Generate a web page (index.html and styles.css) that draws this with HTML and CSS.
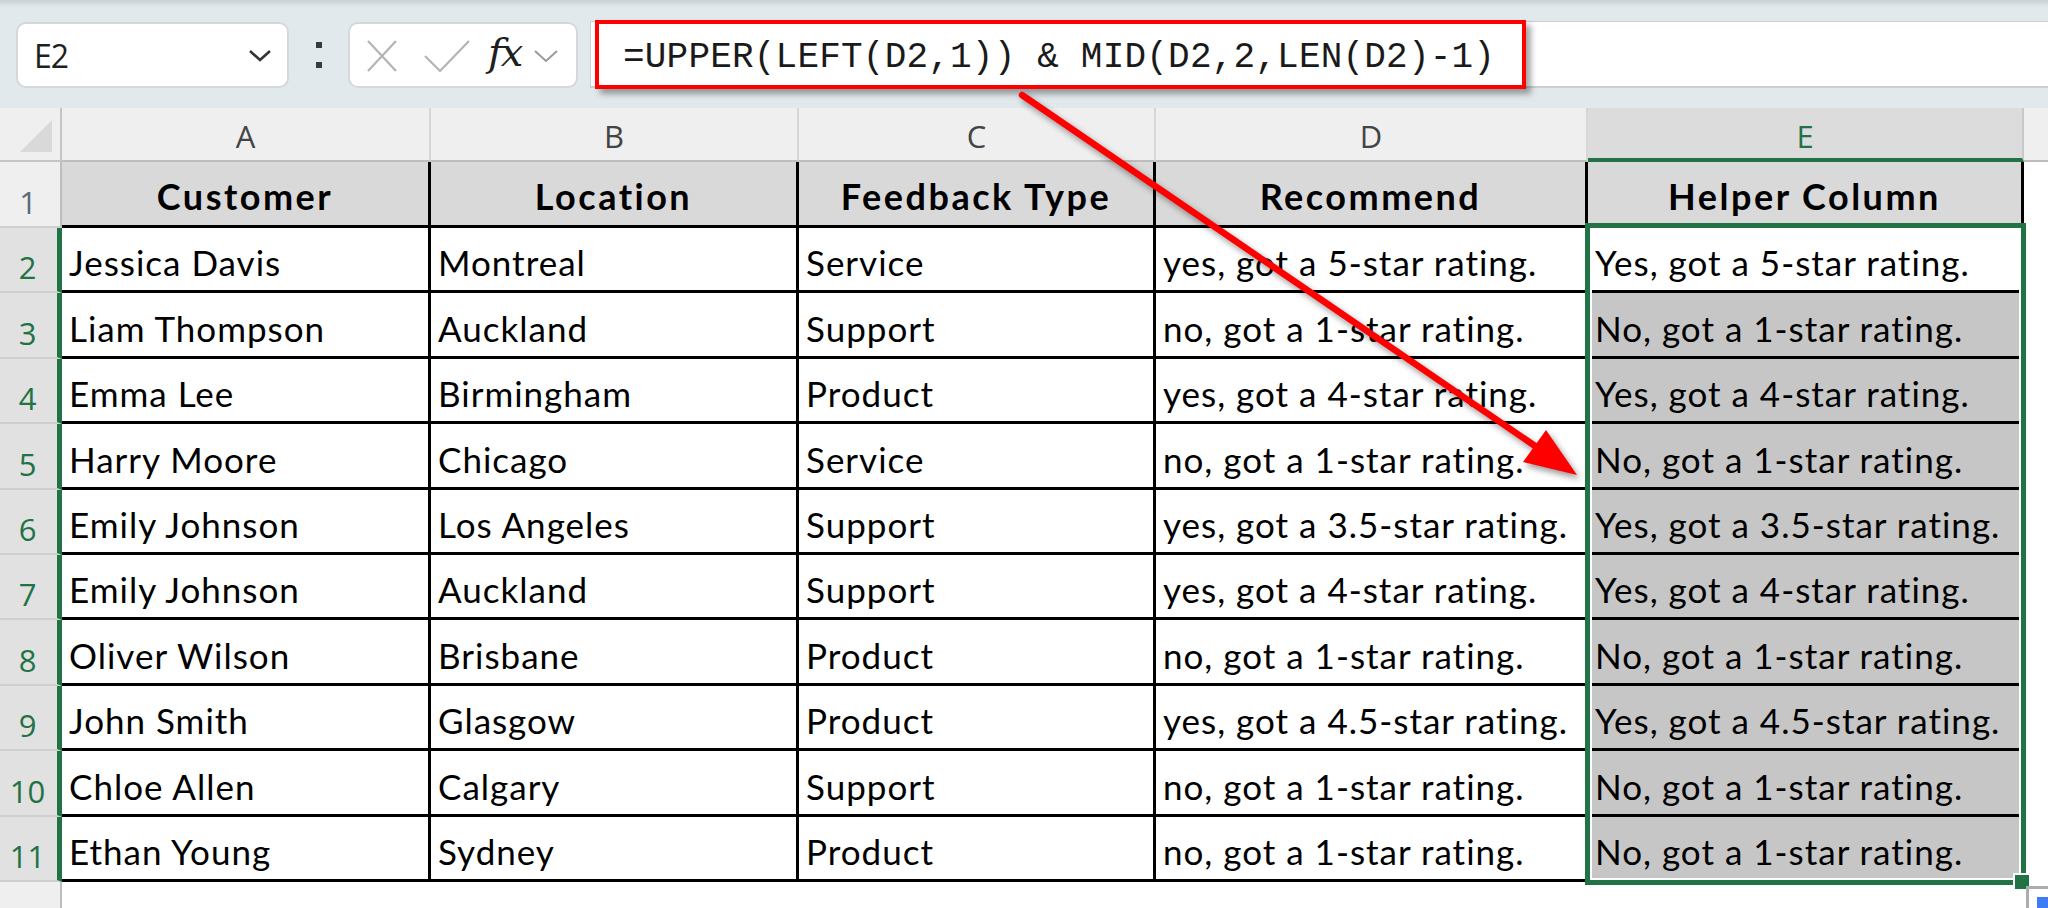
FILE: index.html
```html
<!DOCTYPE html>
<html>
<head>
<meta charset="utf-8">
<link rel="stylesheet" href="styles.css">
</head>
<body>
<div class="toolbar">
  <div class="namebox">
    <span class="nb-text">E2</span>
    <svg class="nb-chev" width="24" height="14" viewBox="0 0 24 14"><path d="M2 2 L12 11 L22 2" fill="none" stroke="#333" stroke-width="2.6"/></svg>
  </div>
  <div class="dots"><i></i><i></i></div>
  <div class="fxbox">
    <svg class="ic-x" width="32" height="34" viewBox="0 0 32 34"><path d="M2 2 L30 32 M30 2 L2 32" fill="none" stroke="#b4b4b4" stroke-width="2.2"/></svg>
    <svg class="ic-check" width="46" height="34" viewBox="0 0 46 34"><path d="M1 17 L16 32 L45 2" fill="none" stroke="#b4b4b4" stroke-width="2.2"/></svg>
    <span class="fx">fx</span>
    <svg class="fx-chev" width="26" height="14" viewBox="0 0 26 14"><path d="M2 2 L13 12 L24 2" fill="none" stroke="#9a9a9a" stroke-width="2"/></svg>
  </div>
  <div class="formula">
    <div class="formula-box">=UPPER(LEFT(D2,1)) &amp; MID(D2,2,LEN(D2)-1)</div>
  </div>
</div>

<div class="sheet">
  <div class="corner"><span class="tri"></span></div>
  <div class="ch">A</div>
  <div class="ch">B</div>
  <div class="ch">C</div>
  <div class="ch">D</div>
  <div class="ch ch-sel">E</div>
  <div class="ch ch-rest"></div>

  <div class="rh">1</div>
  <div class="c hd">Customer</div>
  <div class="c hd">Location</div>
  <div class="c hd">Feedback Type</div>
  <div class="c hd">Recommend</div>
  <div class="c hd">Helper Column</div>
  <div class="rest"></div>

  <div class="rh rh-sel">2</div>
  <div class="c">Jessica Davis</div><div class="c">Montreal</div><div class="c">Service</div><div class="c">yes, got a 5-star rating.</div><div class="c e-act">Yes, got a 5-star rating.</div><div class="rest"></div>

  <div class="rh rh-sel">3</div>
  <div class="c">Liam Thompson</div><div class="c">Auckland</div><div class="c">Support</div><div class="c">no, got a 1-star rating.</div><div class="c e-sel">No, got a 1-star rating.</div><div class="rest"></div>

  <div class="rh rh-sel">4</div>
  <div class="c">Emma Lee</div><div class="c">Birmingham</div><div class="c">Product</div><div class="c">yes, got a 4-star rating.</div><div class="c e-sel">Yes, got a 4-star rating.</div><div class="rest"></div>

  <div class="rh rh-sel">5</div>
  <div class="c">Harry Moore</div><div class="c">Chicago</div><div class="c">Service</div><div class="c">no, got a 1-star rating.</div><div class="c e-sel">No, got a 1-star rating.</div><div class="rest"></div>

  <div class="rh rh-sel">6</div>
  <div class="c">Emily Johnson</div><div class="c">Los Angeles</div><div class="c">Support</div><div class="c">yes, got a 3.5-star rating.</div><div class="c e-sel">Yes, got a 3.5-star rating.</div><div class="rest"></div>

  <div class="rh rh-sel">7</div>
  <div class="c">Emily Johnson</div><div class="c">Auckland</div><div class="c">Support</div><div class="c">yes, got a 4-star rating.</div><div class="c e-sel">Yes, got a 4-star rating.</div><div class="rest"></div>

  <div class="rh rh-sel">8</div>
  <div class="c">Oliver Wilson</div><div class="c">Brisbane</div><div class="c">Product</div><div class="c">no, got a 1-star rating.</div><div class="c e-sel">No, got a 1-star rating.</div><div class="rest"></div>

  <div class="rh rh-sel">9</div>
  <div class="c">John Smith</div><div class="c">Glasgow</div><div class="c">Product</div><div class="c">yes, got a 4.5-star rating.</div><div class="c e-sel">Yes, got a 4.5-star rating.</div><div class="rest"></div>

  <div class="rh rh-sel">10</div>
  <div class="c">Chloe Allen</div><div class="c">Calgary</div><div class="c">Support</div><div class="c">no, got a 1-star rating.</div><div class="c e-sel">No, got a 1-star rating.</div><div class="rest"></div>

  <div class="rh rh-sel">11</div>
  <div class="c">Ethan Young</div><div class="c">Sydney</div><div class="c">Product</div><div class="c">no, got a 1-star rating.</div><div class="c e-sel">No, got a 1-star rating.</div><div class="rest"></div>

  <div class="rh rh-last"></div>
  <div class="blank"></div><div class="blank"></div><div class="blank"></div><div class="blank"></div><div class="blank"></div><div class="blank"></div>

  <div class="selection"></div>
  <div class="handle"></div>
  <div class="qa"><span></span></div>
</div>

<svg class="arrow" width="2048" height="908" viewBox="0 0 2048 908">
  <g class="arrow-g">
    <line x1="1022" y1="95" x2="1538" y2="448" stroke="#ff0000" stroke-width="6.5" stroke-linecap="round"/>
    <polygon points="1577,475 1546,430 1523,462" fill="#ff0000"/>
  </g>
</svg>
</body>
</html>
```

FILE: styles.css
```css
* { box-sizing: border-box; }
html, body { margin: 0; padding: 0; }
body {
  width: 2048px;
  height: 908px;
  overflow: hidden;
  background: #ffffff;
  position: relative;
  font-family: "Lato", "Liberation Sans", sans-serif;
}

/* ---------- toolbar ---------- */
.toolbar {
  height: 108px;
  display: flex;
  align-items: flex-start;
  background: linear-gradient(#c8d0d4 0px, #dbe3e6 5px, #e1e9ec 9px, #e1e9ec 100%);
}
.namebox {
  margin: 22px 0 0 16px;
  width: 273px;
  height: 66px;
  background: #fff;
  border: 2px solid #d4d8da;
  border-radius: 10px;
  display: flex;
  align-items: center;
  padding-left: 16px;
}
.nb-text {
  font-family: "Open Sans", "Noto Sans", sans-serif;
  font-size: 32px;
  color: #1f1f1f;
  letter-spacing: -1px;
}
.nb-chev { margin-left: auto; margin-right: 15px; margin-top: 2px; }
.dots {
  width: 59px;
  height: 108px;
  display: flex;
  flex-direction: column;
  align-items: center;
  justify-content: center;
  gap: 14px;
  padding-top: 2px;
}
.dots i {
  display: block;
  width: 6px;
  height: 6px;
  background: #3a3a3a;
}
.fxbox {
  margin-top: 22px;
  width: 230px;
  height: 66px;
  background: #fff;
  border: 2px solid #d4d8da;
  border-radius: 10px;
  display: flex;
  align-items: center;
  padding-left: 16px;
}
.ic-x { margin-top: 2px; }
.ic-check { margin-left: 26px; margin-top: 2px; }
.fx {
  font-family: "DejaVu Serif", "Liberation Serif", serif;
  font-style: italic;
  font-size: 40px;
  color: #1f1f1f;
  margin-left: 18px;
  letter-spacing: -2px;
  margin-top: -6px;
}
.fx-chev { margin-left: 12px; margin-top: 2px; }
.formula {
  margin: 21px 0 0 12px;
  flex: 1;
  height: 67px;
  background: #fff;
  border-top: 1px solid #c9cfd2;
  border-bottom: 2px solid #c9cfd2;
  border-left: 1px solid #c9cfd2;
}
.formula-box {
  margin: -2px 0 0 4px;
  width: 931px;
  height: 69px;
  border: 4px solid #ff0000;
  box-shadow: 5px 5px 6px rgba(0,0,0,0.35);
  background: #fff;
  font-family: "Liberation Mono", "DejaVu Sans Mono", monospace;
  font-size: 36px;
  letter-spacing: 0.2px;
  color: #1a1a1a;
  padding-left: 24px;
  display: flex;
  align-items: center;
  padding-top: 6px;
  white-space: pre;
}

/* ---------- sheet ---------- */
.sheet {
  position: relative;
  height: 800px;
  display: grid;
  grid-template-columns: 62px 369px 368px 357px 432px 436px 1fr;
  grid-template-rows: 54px 66px repeat(10, 65.4px) 1fr;
}
.corner {
  background: #efefef;
  border-right: 2px solid #c4c4c4;
  border-bottom: 2px solid #c4c4c4;
  padding: 12px 0 0 20px;
}
.tri {
  display: block;
  width: 32px;
  height: 32px;
  background: #d9d9d9;
  clip-path: polygon(100% 0, 100% 100%, 0 100%);
}
.ch {
  background: #efefef;
  border-right: 2px solid #d6d6d6;
  border-bottom: 2px solid #bdbdbd;
  font-family: "Open Sans", "Noto Sans", sans-serif;
  font-size: 31px;
  color: #444;
  display: flex;
  justify-content: center;
  align-items: flex-end;
  padding-bottom: 4px;
  line-height: 40px;
}
.ch-sel {
  background: #dcdcdc;
  color: #217346;
  border-bottom: 4px solid #217346;
  padding-bottom: 2px;
  border-right-color: #c8c8c8;
}
.ch-rest { border-right: none; }

.rh {
  background: #efefef;
  border-right: 2px solid #bdbdbd;
  border-bottom: 2px solid #cfcfcf;
  font-family: "Open Sans", "Noto Sans", sans-serif;
  font-size: 31px;
  color: #5a6b7b;
  display: flex;
  justify-content: center;
  align-items: flex-end;
  padding-bottom: 4px;
  padding-right: 4px;
  line-height: 40px;
}
.rh-sel {
  background: #e1e1e1;
  color: #217346;
  border-right: 5px solid #217346;
  padding-right: 2px;
}
.rh-last { border-bottom: none; }

.c {
  border-right: 3px solid #000;
  border-bottom: 3px solid #000;
  background: #fff;
  font-size: 35px;
  letter-spacing: 1px;
  color: #000;
  display: flex;
  align-items: flex-end;
  padding: 0 0 6px 7px;
  line-height: 44px;
  white-space: nowrap;
}
.hd {
  background: #d9d9d9;
  font-weight: 700;
  font-size: 36px;
  letter-spacing: 2.5px;
  justify-content: center;
  padding-left: 0;
  padding-bottom: 7px;
}
.e-sel { background: #c6c6c6; }
.rest, .blank { background: #fff; }

.selection {
  position: absolute;
  left: 1585px;
  top: 115px;
  width: 441px;
  height: 662px;
  border: 5px solid #217346;
  box-shadow: inset 0 0 0 2px #fff;
  pointer-events: none;
}
.handle {
  position: absolute;
  left: 2013px;
  top: 765px;
  width: 16px;
  height: 16px;
  background: #217346;
  border: 2px solid #fff;
  border-right: none;
  border-bottom: none;
}
.qa {
  position: absolute;
  left: 2026px;
  top: 778px;
  width: 34px;
  height: 34px;
  border: 3px solid #adadad;
  background: #fff;
  padding: 8px 0 0 8px;
}
.qa span {
  display: block;
  width: 14px;
  height: 14px;
  background: #3d7cf5;
}

/* ---------- arrow ---------- */
.arrow {
  position: absolute;
  left: 0;
  top: 0;
  pointer-events: none;
}
.arrow-g { filter: drop-shadow(3px 4px 3px rgba(0,0,0,0.4)); }
```
